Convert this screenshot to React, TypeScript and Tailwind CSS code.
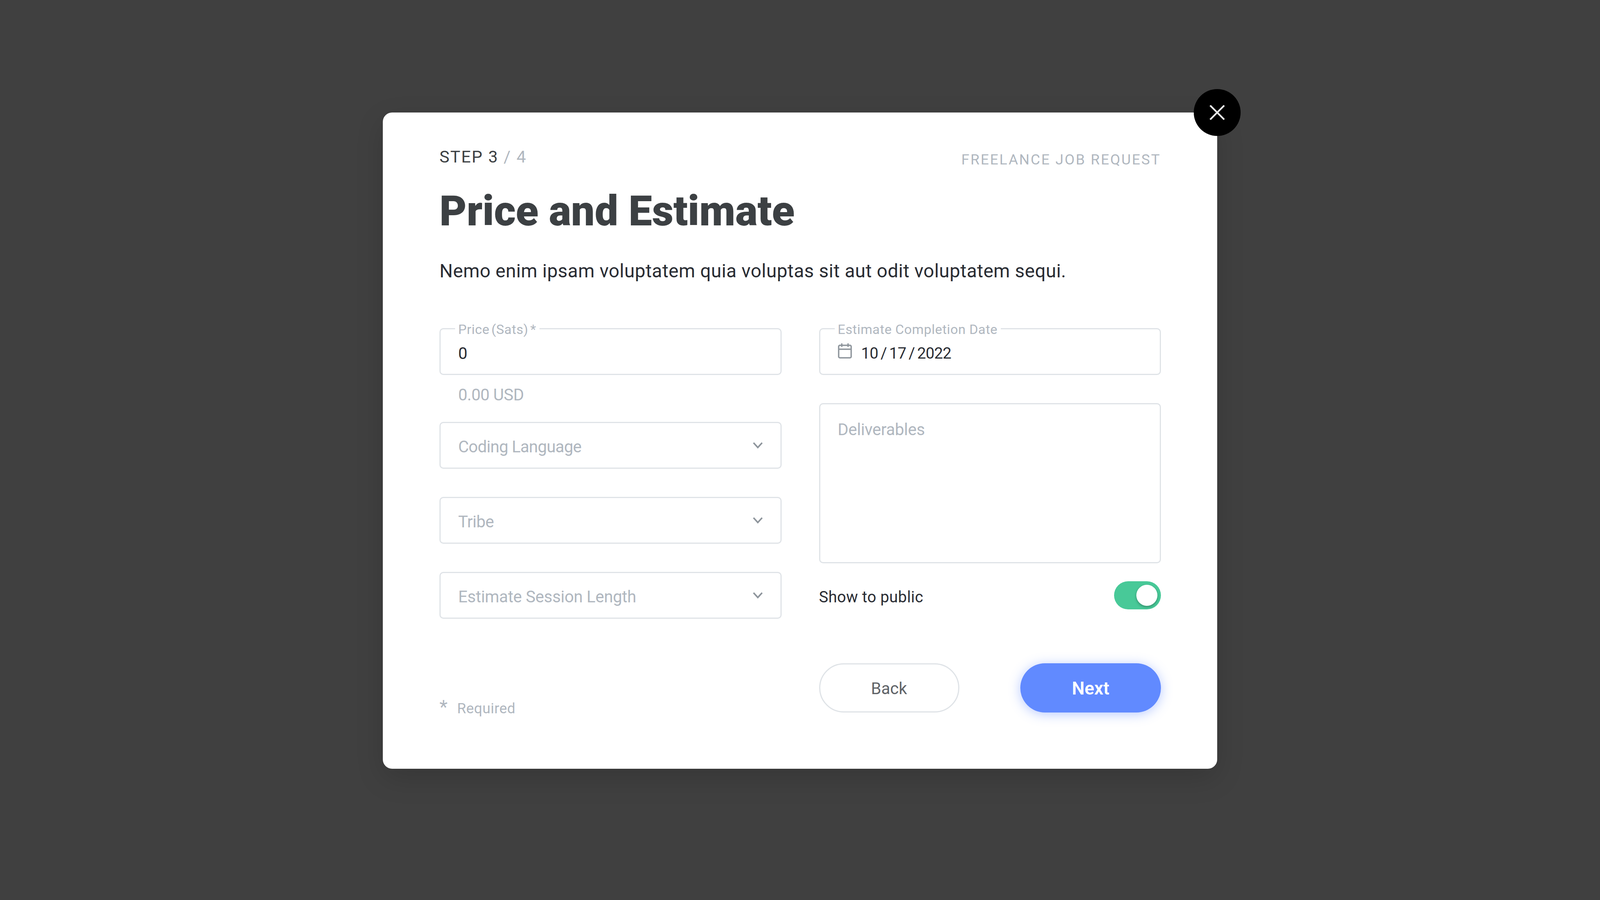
function Chevron() {
  return (
    <svg width="28" height="18" viewBox="0 0 28 18" fill="none" stroke="#8e959c" strokeWidth="4" className="shrink-0">
      <path d="M3 2.5 14 14.5 25 2.5" />
    </svg>
  )
}

function CalendarIcon() {
  return (
    <svg width="36" height="40" viewBox="0 0 36 40" fill="none" stroke="#8e959c" strokeWidth="3.5" className="shrink-0 -translate-y-[7px]">
      <rect x="2" y="6" width="32" height="32" rx="3" />
      <path d="M2 16h32M10 1v9M26 1v9" />
    </svg>
  )
}

function SelectBox({ label, tracking }: { label: string; tracking: string }) {
  return (
    <div className="flex h-[120px] items-center justify-between rounded-[10px] border-[3px] border-[#dfe3e7] pl-[45px] pr-[44px]">
      <span className={`translate-y-[4px] text-[42px] leading-[50px] text-[#b0b7bf] ${tracking}`}>{label}</span>
      <Chevron />
    </div>
  )
}

function FloatingField({ label, labelClass, children }: { label: string; labelClass: string; children: React.ReactNode }) {
  return (
    <div className="relative flex h-[120px] items-center gap-[24px] rounded-[10px] border-[3px] border-[#dfe3e7] pl-[45px] pt-[10px]">
      <span className={`absolute left-[37px] top-[-20px] bg-white px-[8px] text-[34px] leading-[40px] tracking-[0.6px] text-[#b0b7bf] ${labelClass}`}>{label}</span>
      {children}
    </div>
  )
}

export default function App() {
  return (
    <div className="flex min-h-[2304px] justify-center bg-[#404040] pt-[288px] font-['Roboto',sans-serif]">
      <div className="relative h-[1680px] w-[2136px] rounded-[24px] bg-white pl-[145px] pr-[144px] pt-[83px] shadow-[0_24px_70px_rgba(0,0,0,0.15)]">
        <button className="absolute right-[-60px] top-[-60px] flex h-[120px] w-[120px] items-center justify-center rounded-full bg-black">
          <svg width="40" height="40" viewBox="0 0 40 40" stroke="#e8e8e8" strokeWidth="4.5" fill="none">
            <path d="M2 2 38 38M38 2 2 38" />
          </svg>
        </button>

        <div className="flex items-start justify-between">
          <div className="text-[43px] leading-[60px] tracking-[2.3px] text-[#3c4043]">
            STEP 3 <span className="text-[#b0b7bf]">/ 4</span>
          </div>
          <div className="mt-[8px] text-[37px] leading-[60px] tracking-[3.05px] text-[#b0b7bf]">FREELANCE JOB REQUEST</div>
        </div>

        <h1 className="mt-[42px] text-[107px] font-black leading-[120px] text-[#3c4043]">Price and Estimate</h1>
        <p className="mt-[58px] text-[48px] leading-[70px] tracking-[0.48px] text-[#292c33]">Nemo enim ipsam voluptatem quia voluptas sit aut odit voluptatem sequi.</p>

        <div className="mt-[111px] grid grid-cols-2 gap-x-[96px]">
          <div className="flex flex-col">
            <FloatingField label="Price (Sats) *" labelClass="[word-spacing:-4px]">
              <span className="text-[42px] leading-[50px] text-[#292c33]">0</span>
            </FloatingField>
            <div className="mb-[44px] mt-[26px] pl-[48px] text-[42px] leading-[50px] tracking-[-0.5px] text-[#b0b7bf]">0.00 USD</div>
            <div className="flex flex-col gap-[72px]">
              <SelectBox label="Coding Language" tracking="tracking-[-0.75px]" />
              <SelectBox label="Tribe" tracking="tracking-[-0.5px]" />
              <SelectBox label="Estimate Session Length" tracking="tracking-[-0.3px]" />
            </div>
          </div>

          <div className="flex flex-col">
            <FloatingField label="Estimate Completion Date" labelClass="[word-spacing:0px]">
              <CalendarIcon />
              <span className="text-[40px] leading-[50px] tracking-[-0.8px] text-[#292c33] [word-spacing:-2.75px]">10 / 17 / 2022</span>
            </FloatingField>
            <div className="mt-[72px] h-[410px] rounded-[10px] border-[3px] border-[#dfe3e7] pl-[45px] pt-[40px] text-[42px] leading-[50px] tracking-[-0.3px] text-[#b0b7bf]">Deliverables</div>
            <div className="mt-[46px] flex items-center justify-between">
              <span className="translate-y-[5px] text-[40px] leading-[50px] tracking-[0.4px] text-[#292c33]">Show to public</span>
              <div className="flex h-[72px] w-[120px] items-center justify-end rounded-full bg-[#48c998] pr-[9px]">
                <div className="h-[54px] w-[54px] rounded-full bg-white shadow-[0_3px_6px_rgba(0,0,0,0.3)]" />
              </div>
            </div>
          </div>
        </div>

        <div className="mt-[114px] grid grid-cols-2 gap-x-[96px]">
          <div className="flex translate-y-[15px] items-end gap-[24px] text-[37px] leading-[50px] tracking-[0.5px] text-[#b0b7bf]">
            <span className="-translate-y-[4px] text-[48px]">*</span>
            <span>Required</span>
          </div>
          <div className="flex justify-between">
            <button className="h-[126px] w-[359px] rounded-full border-[3px] border-[#dfe3e7] pt-[3px] text-[42px] text-[#5f6368]">Back</button>
            <button className="h-[126px] w-[360px] rounded-full bg-[#618aff] pt-[3px] text-[46px] font-semibold text-white shadow-[0_4px_30px_rgba(97,138,255,0.45)]">Next</button>
          </div>
        </div>
      </div>
    </div>
  )
}
